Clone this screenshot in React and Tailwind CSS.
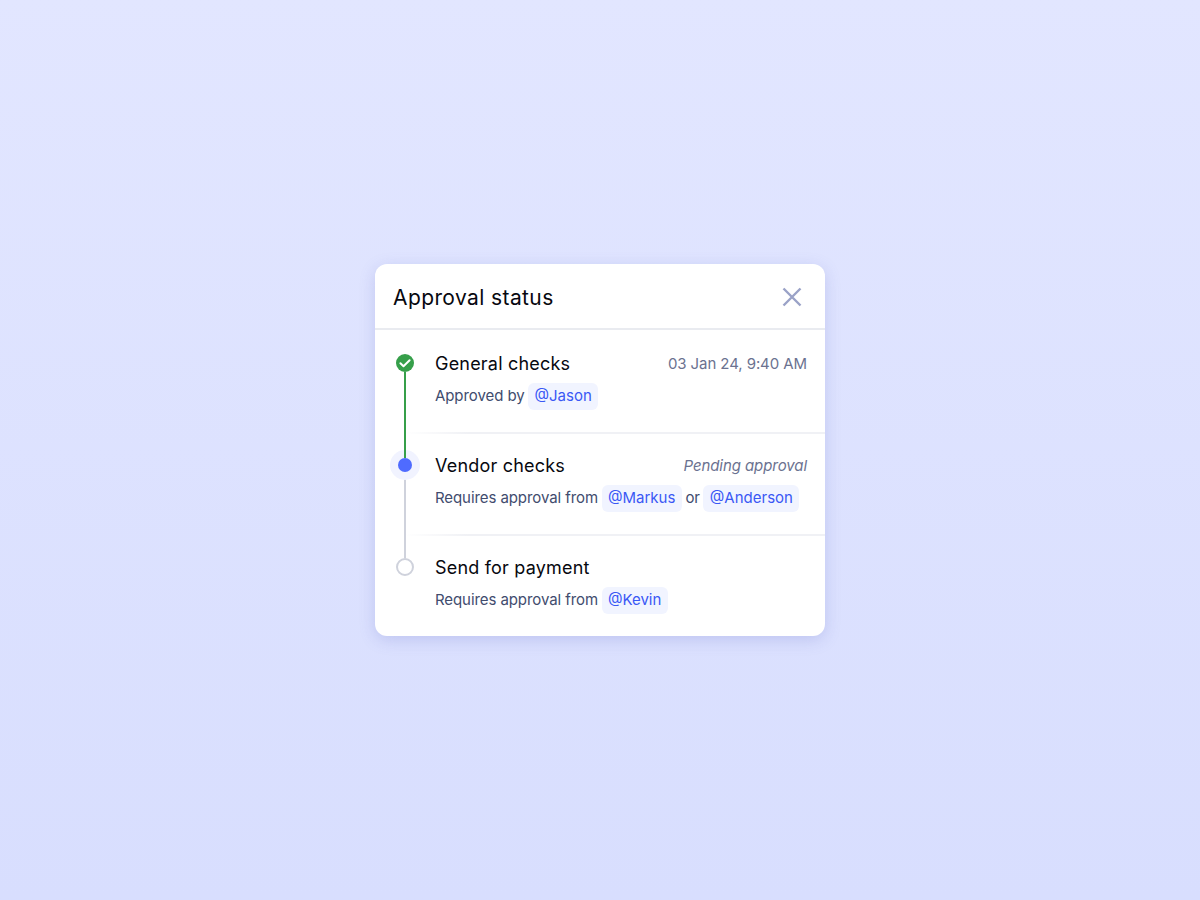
import React from "react";

const Tag = ({ children }) => (
  <span className="inline-flex h-[27px] items-center rounded-[6px] bg-[#f1f4ff] px-[6.5px] tracking-[0px] text-[#3a58f5]">{children}</span>
);

const Row = ({ title, right, italic, last, children }) => (
  <div className="relative flex h-[102px] flex-col pt-[22px] pr-[18px]">
    <div className="flex h-[24px] items-center justify-between">
      <span className="text-[18px] leading-[24px] tracking-[0.2px] text-[#07080f]">{title}</span>
      <span className={"text-[15px] leading-[20px] tracking-[-0.08px] text-[#6b7290] " + (italic ? "italic" : "")}>{right}</span>
    </div>
    <div className="mt-[7px] flex h-[27px] items-center gap-[3.5px] text-[15px] tracking-[-0.08px] text-[#414c6e]">{children}</div>
    {!last && <div className="absolute right-0 bottom-[-2px] left-[-30px] h-[2px] bg-gradient-to-r from-white to-[#f0f1f5] to-[15%]" />}
  </div>
);

export default function App() {
  return (
    <div className="flex h-[900px] w-full items-center justify-center bg-gradient-to-b from-[#e2e6ff] to-[#d8defe] font-['Inter',sans-serif]">
      <div className="h-[372px] w-[450px] overflow-hidden rounded-[12px] bg-white shadow-[0_4px_16px_rgba(90,100,190,0.22)]">
        <div className="flex h-[66px] items-center justify-between border-b-2 border-[#e9ebf0] pr-[21px] pl-[18px]">
          <span className="pt-[3px] text-[21px] tracking-[0.4px] text-[#07080f]">Approval status</span>
          <svg width="24" height="24" viewBox="0 0 24 24" fill="none" stroke="#9aa2c7" strokeWidth="2.4" className="mt-[2px] shrink-0">
            <path d="M3.5 3.5 20.5 20.5M20.5 3.5 3.5 20.5" />
          </svg>
        </div>
        <div className="flex">
          <div className="relative z-10 flex w-[60px] shrink-0 flex-col items-center pt-[24px]">
            <svg width="18" height="18" viewBox="0 0 18 18" className="shrink-0">
              <circle cx="9" cy="9" r="9" fill="#369f4a" />
              <path d="M4.4 9.2 7.5 12.2 13.6 6.2" fill="none" stroke="#fff" strokeWidth="2" strokeLinecap="round" strokeLinejoin="round" />
            </svg>
            <div className="h-[86px] w-[2px] bg-[#369f4a]" />
            <div className="relative flex h-[14px] w-[14px] shrink-0 items-center justify-center">
              <div className="absolute top-[-8px] left-[-8px] h-[30px] w-[30px] rounded-full bg-[#f1f3ff]" />
              <div className="absolute top-[-8px] left-[6px] h-[8px] w-[2px] bg-[#369f4a]" />
              <div className="absolute h-[14px] w-[14px] rounded-full bg-[#4f6bff]" />
            </div>
            <div className="h-[86px] w-[2px] bg-[#cfd2dc]" />
            <div className="h-[18px] w-[18px] shrink-0 rounded-full border-2 border-[#cfd2dc] bg-white" />
          </div>
          <div className="min-w-0 flex-1">
            <Row title="General checks" right="03 Jan 24, 9:40 AM">
              <span>Approved by</span>
              <Tag>@Jason</Tag>
            </Row>
            <Row title="Vendor checks" right="Pending approval" italic>
              <span>Requires approval from</span>
              <Tag>@Markus</Tag>
              <span>or</span>
              <Tag>@Anderson</Tag>
            </Row>
            <Row title="Send for payment" last>
              <span>Requires approval from</span>
              <Tag>@Kevin</Tag>
            </Row>
          </div>
        </div>
      </div>
    </div>
  );
}
